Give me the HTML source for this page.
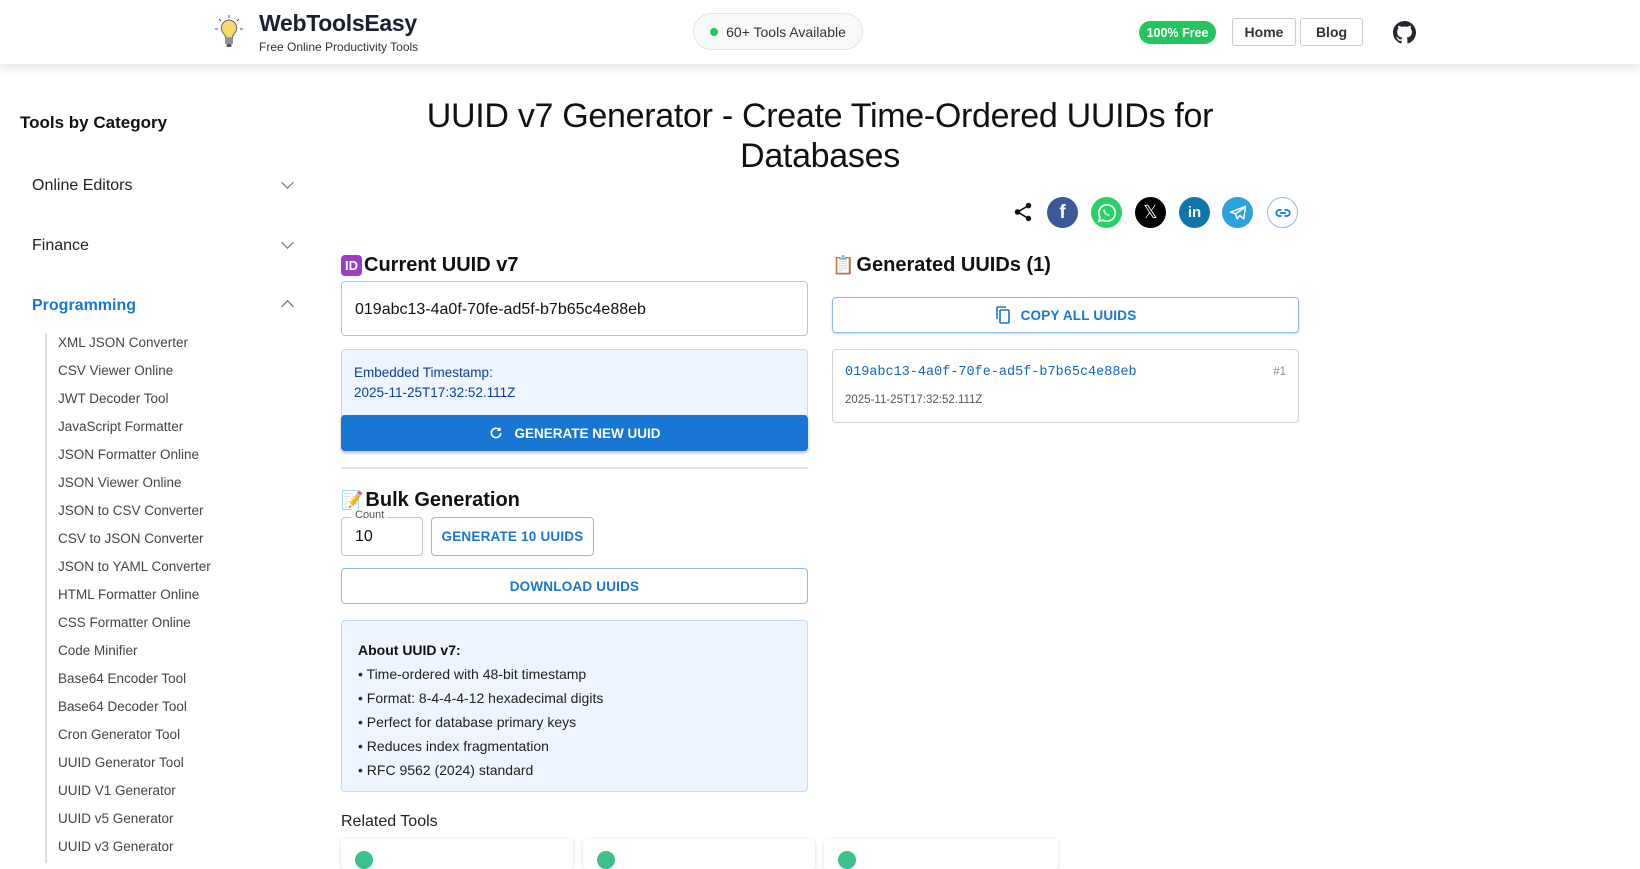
<!DOCTYPE html>
<html><head><meta charset="utf-8"><style>
*{box-sizing:border-box;margin:0;padding:0}
body{width:1640px;height:856px;overflow:hidden;background:#fff;font-family:"Liberation Sans",sans-serif;color:#111;position:relative}
.abs{position:absolute}
header{position:absolute;left:0;top:0;width:1640px;height:64px;background:#fff;box-shadow:0 3px 10px rgba(0,0,0,.12);z-index:2}
.btn-o{position:absolute;border:1px solid #ccc;border-radius:3px;font-size:14px;color:#333;display:flex;align-items:center;justify-content:center;font-weight:bold}
.side{position:absolute;left:32px;font-size:16px;color:#222}
.chev{position:absolute;left:283px;width:9px;height:9px;border-right:1.6px solid #666;border-bottom:1.6px solid #666}
.sub{position:absolute;left:58px;font-size:13.5px;color:#444}
.h2{position:absolute;font-size:20px;font-weight:bold;color:#111;display:flex;align-items:center;gap:2px}
.box{position:absolute;border-radius:4px}
.cbtn{position:absolute;border:1px solid #90b8e6;border-radius:4px;color:#1976d2;font-size:13.5px;font-weight:bold;display:flex;align-items:center;justify-content:center;letter-spacing:.2px}
.soc{position:absolute;top:197px;width:31px;height:31px;border-radius:50%;display:flex;align-items:center;justify-content:center}
</style></head><body>
<header>
 <svg class="abs" style="left:214px;top:14px" width="30" height="36" viewBox="0 0 30 36">
  <g stroke="#555" stroke-width="1"><line x1="15" y1="1" x2="15" y2="4"/><line x1="5" y1="5" x2="7" y2="7"/><line x1="25" y1="5" x2="23" y2="7"/><line x1="1" y1="15" x2="4" y2="15"/><line x1="29" y1="15" x2="26" y2="15"/></g>
  <path d="M15 6a8 8 0 0 0-5 14c1 1 1.5 2.5 1.5 4h7c0-1.5.5-3 1.5-4a8 8 0 0 0-5-14z" fill="#f7d96b" stroke="#666"/>
  <rect x="11" y="24" width="8" height="6" rx="1" fill="#8a8f99"/><rect x="12.5" y="30" width="5" height="3" rx="1" fill="#555"/>
 </svg>
 <div class="abs" style="left:259px;top:10px;font-size:23px;font-weight:bold;color:#1a2030;letter-spacing:-.3px">WebToolsEasy</div>
 <div class="abs" style="left:259px;top:40px;font-size:12px;color:#333">Free Online Productivity Tools</div>
 <div class="abs" style="left:693px;top:13px;width:170px;height:37px;border:1px solid #e2e4e8;border-radius:19px;background:#f8f9fb;display:flex;align-items:center;justify-content:center;font-size:14px;color:#333;gap:8px"><span style="width:8px;height:8px;border-radius:50%;background:#22c55e;display:inline-block"></span>60+ Tools Available</div>
 <div class="abs" style="left:1139px;top:21px;width:77px;height:23px;border-radius:12px;background:#22c55e;color:#fff;font-size:12.5px;font-weight:bold;display:flex;align-items:center;justify-content:center">100% Free</div>
 <div class="btn-o" style="left:1232px;top:18px;width:64px;height:28px">Home</div>
 <div class="btn-o" style="left:1300px;top:18px;width:63px;height:28px">Blog</div>
 <svg class="abs" style="left:1393px;top:21px" width="23" height="23" viewBox="0 0 16 16"><path fill="#24292f" d="M8 0C3.58 0 0 3.58 0 8c0 3.540 2.29 6.53 5.47 7.59.4.07.55-.17.55-.38 0-.19-.01-.82-.01-1.49-2.01.37-2.53-.49-2.69-.94-.09-.23-.48-.94-.82-1.130-.28-.15-.68-.52-.01-.53.63-.01 1.08.58 1.23.82.72 1.21 1.87.87 2.33.66.07-.52.28-.87.51-1.07-1.78-.2-3.64-.89-3.640-3.95 0-.87.31-1.59.82-2.15-.08-.2-.36-1.02.08-2.12 0 0 .67-.21 2.2.82.64-.18 1.32-.27 2-.27.68 0 1.36.09 2 .27 1.53-1.04 2.2-.82 2.2-.82.44 1.1.16 1.92.08 2.12.51.56.82 1.27.82 2.15 0 3.07-1.87 3.75-3.65 3.95.29.25.54.73.54 1.48 0 1.07-.01 1.93-.01 2.2 0 .21.15.46.55.38A8.013 8.013 0 0016 8c0-4.42-3.58-8-8-8z"/></svg>
</header>

<div class="abs" style="left:20px;top:113px;font-size:17px;font-weight:bold">Tools by Category</div>
<div class="side" style="top:177px">Online Editors</div><div class="chev" style="top:178px;transform:rotate(45deg)"></div>
<div class="side" style="top:237px">Finance</div><div class="chev" style="top:238px;transform:rotate(45deg)"></div>
<div class="side" style="top:297px;color:#1976d2;font-weight:bold">Programming</div><div class="chev" style="top:302px;transform:rotate(225deg)"></div>
<div class="abs" style="left:45px;top:333px;width:2px;height:530px;background:#ddd"></div>
<div class="sub" style="top:335px">XML JSON Converter</div>
<div class="sub" style="top:363px">CSV Viewer Online</div>
<div class="sub" style="top:391px">JWT Decoder Tool</div>
<div class="sub" style="top:419px">JavaScript Formatter</div>
<div class="sub" style="top:447px">JSON Formatter Online</div>
<div class="sub" style="top:475px">JSON Viewer Online</div>
<div class="sub" style="top:503px">JSON to CSV Converter</div>
<div class="sub" style="top:531px">CSV to JSON Converter</div>
<div class="sub" style="top:559px">JSON to YAML Converter</div>
<div class="sub" style="top:587px">HTML Formatter Online</div>
<div class="sub" style="top:615px">CSS Formatter Online</div>
<div class="sub" style="top:643px">Code Minifier</div>
<div class="sub" style="top:671px">Base64 Encoder Tool</div>
<div class="sub" style="top:699px">Base64 Decoder Tool</div>
<div class="sub" style="top:727px">Cron Generator Tool</div>
<div class="sub" style="top:755px">UUID Generator Tool</div>
<div class="sub" style="top:783px">UUID V1 Generator</div>
<div class="sub" style="top:811px">UUID v5 Generator</div>
<div class="sub" style="top:839px">UUID v3 Generator</div>

<div class="abs" style="left:320px;top:96px;width:1000px;text-align:center;font-size:34px;line-height:40px;color:#111;letter-spacing:-.3px;white-space:nowrap">UUID v7 Generator - Create Time-Ordered UUIDs for<br>Databases</div>

<svg class="abs" style="left:1012px;top:201px" width="22" height="22" viewBox="0 0 24 24"><path fill="#111" d="M18 16.08c-.76 0-1.44.3-1.96.77L8.91 12.7c.05-.23.09-.46.09-.7s-.04-.47-.09-.7l7.05-4.11c.54.5 1.25.81 2.04.81 1.66 0 3-1.34 3-3s-1.34-3-3-3-3 1.34-3 3c0 .24.04.47.09.7L8.04 9.81C7.5 9.31 6.79 9 6 9c-1.66 0-3 1.34-3 3s1.34 3 3 3c.79 0 1.5-.31 2.04-.81l7.12 4.16c-.05.21-.08.43-.08.65 0 1.61 1.31 2.92 2.92 2.92s2.92-1.31 2.92-2.92-1.31-2.92-2.92-2.92z"/></svg>
<div class="soc" style="left:1047px;background:#3b5998;color:#fff;font-weight:bold;font-size:19px">f</div>
<div class="soc" style="left:1091px;background:#25d366"><svg width="22" height="22" viewBox="0 0 24 24"><path d="M12 3a9 9 0 0 0-7.7 13.6L3 21l4.5-1.2A9 9 0 1 0 12 3z" fill="none" stroke="#fff" stroke-width="1.8"/><path d="M9 8c-.5 0-1 .8-1 1.5 0 2 2.5 5 5.5 5.5.8 0 1.5-.5 1.5-1l-1.5-.8-.8.7c-1-.4-2.2-1.5-2.6-2.6l.7-.8L9.8 8z" fill="#fff"/></svg></div>
<div class="soc" style="left:1135px;background:#000;color:#fff;font-size:18px">𝕏</div>
<div class="soc" style="left:1179px;background:#0e76a8;color:#fff;font-weight:bold;font-size:15px">in</div>
<div class="soc" style="left:1222px;background:#2aa3de"><svg width="20" height="20" viewBox="0 0 24 24"><path d="M21 4L3 11l6 2 2 6 3-4 5 4z M9 13l10-7" fill="none" stroke="#fff" stroke-width="1.8" stroke-linejoin="round"/></svg></div>
<div class="soc" style="left:1267px;border:1px solid #8cbbe8;background:#fff"><svg width="18" height="18" viewBox="0 0 24 24"><path d="M10 8H7a4 4 0 0 0 0 8h3M14 8h3a4 4 0 0 1 0 8h-3M8 12h8" fill="none" stroke="#1976d2" stroke-width="2.2"/></svg></div>

<div class="h2" style="left:341px;top:254px"><span style="display:inline-block;width:21px;height:21px;border-radius:4px;background:#9b3fc4;color:#fff;font-size:13px;line-height:21px;text-align:center">ID</span>Current UUID v7</div>
<div class="box" style="left:341px;top:281px;width:467px;height:55px;border:1px solid #c4c4c4;font-size:16px;padding:19px 0 0 13px">019abc13-4a0f-70fe-ad5f-b7b65c4e88eb</div>
<div class="box" style="left:341px;top:349px;width:467px;height:67px;border:1px solid #c5dcf5;background:#eef5fe;color:#0d3c9c;font-size:13.5px;padding:13px 0 0 12px;line-height:20px;border-radius:4px 4px 0 0">Embedded Timestamp:<br>2025-11-25T17:32:52.111Z</div>
<div class="box" style="left:341px;top:415px;width:467px;height:36px;background:#1976d2;color:#fff;font-size:13.5px;font-weight:bold;display:flex;align-items:center;justify-content:center;gap:10px;box-shadow:0 2px 3px rgba(0,0,0,.25)"><svg width="16" height="16" viewBox="0 0 24 24"><path d="M19 12a7 7 0 1 1-2-5" fill="none" stroke="#fff" stroke-width="2.4"/><path d="M19 3v6h-6z" fill="#fff"/></svg>GENERATE NEW UUID</div>
<div class="abs" style="left:341px;top:467px;width:467px;height:2px;background:#e6e6e6"></div>

<div class="h2" style="left:341px;top:489px"><span style="font-size:18px">📝</span>Bulk Generation</div>
<div class="box" style="left:341px;top:517px;width:82px;height:39px;border:1px solid #c4c4c4;font-size:16px;padding:10px 0 0 13px">10</div>
<div class="abs" style="left:351px;top:509px;background:#fff;padding:0 4px;font-size:11px;color:#555">Count</div>
<div class="cbtn" style="left:431px;top:517px;width:163px;height:39px">GENERATE 10 UUIDS</div>
<div class="cbtn" style="left:341px;top:568px;width:467px;height:36px">DOWNLOAD UUIDS</div>
<div class="box" style="left:341px;top:620px;width:467px;height:172px;border:1px solid #c5dcf5;background:#eef5fe;padding:17px 0 0 16px;font-size:14px;line-height:24px;color:#222">
<b style="color:#111">About UUID v7:</b><br>• Time-ordered with 48-bit timestamp<br>• Format: 8-4-4-4-12 hexadecimal digits<br>• Perfect for database primary keys<br>• Reduces index fragmentation<br>• RFC 9562 (2024) standard</div>
<div class="abs" style="left:341px;top:813px;font-size:16px;color:#222">Related Tools</div>
<div class="box" style="left:341px;top:839px;width:232px;height:30px;box-shadow:0 1px 4px rgba(0,0,0,.15)"><div class="abs" style="left:14px;top:12px;width:18px;height:18px;border-radius:50%;background:#3cc08c"></div></div>
<div class="box" style="left:583px;top:839px;width:232px;height:30px;box-shadow:0 1px 4px rgba(0,0,0,.15)"><div class="abs" style="left:14px;top:12px;width:18px;height:18px;border-radius:50%;background:#3cc08c"></div></div>
<div class="box" style="left:824px;top:839px;width:234px;height:30px;box-shadow:0 1px 4px rgba(0,0,0,.15)"><div class="abs" style="left:14px;top:12px;width:18px;height:18px;border-radius:50%;background:#3cc08c"></div></div>

<div class="h2" style="left:832px;top:254px"><span style="font-size:18px">📋</span>Generated UUIDs (1)</div>
<div class="cbtn" style="left:832px;top:297px;width:467px;height:36px;gap:10px;box-shadow:0 1px 2px rgba(25,118,210,.25)"><svg width="16" height="18" viewBox="0 0 16 18"><rect x="5" y="4" width="9" height="13" rx="1" fill="none" stroke="#1976d2" stroke-width="1.6"/><path d="M2 13V2a1 1 0 0 1 1-1h8" fill="none" stroke="#1976d2" stroke-width="1.6"/></svg>COPY ALL UUIDS</div>
<div class="box" style="left:832px;top:349px;width:467px;height:74px;border:1px solid #d6d6d6">
 <div class="abs" style="left:12px;top:15px;font-family:'Liberation Mono',monospace;font-size:13.5px;color:#1565c0">019abc13-4a0f-70fe-ad5f-b7b65c4e88eb</div>
 <div class="abs" style="right:12px;top:16px;font-size:11.5px;color:#888">#1</div>
 <div class="abs" style="left:12px;top:44px;font-size:11.5px;color:#555">2025-11-25T17:32:52.111Z</div>
</div>
</body></html>
